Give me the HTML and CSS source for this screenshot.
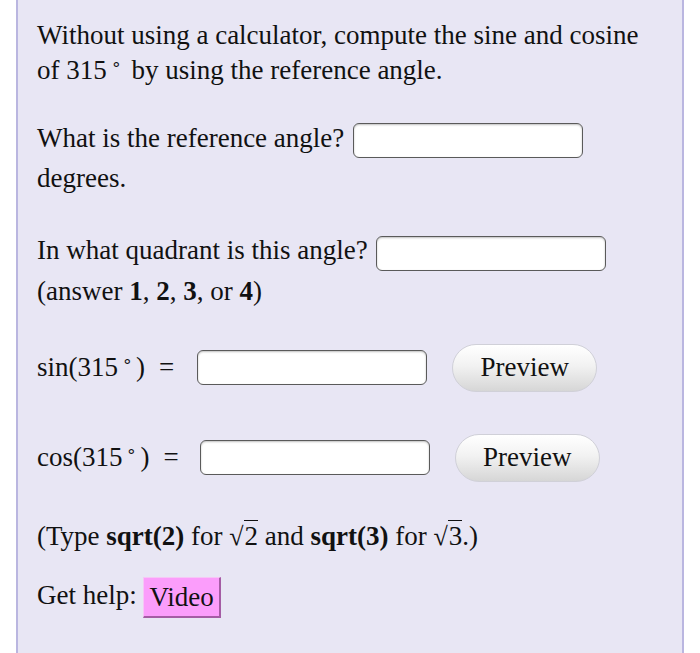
FILE: index.html
```html
<!DOCTYPE html>
<html>
<head>
<meta charset="utf-8">
<link rel="stylesheet" href="styles.css">
</head>
<body>
<div class="panel">
  <p class="intro"><span class="ln">Without using a calculator, compute the sine and cosine</span> <span class="ln">of <span class="m">315<span class="deg">∘</span></span> by using the reference angle.</span></p>

  <p class="q q1">What is the reference angle? <span class="field"></span><br>degrees.</p>

  <p class="q q2">In what quadrant is this angle? <span class="field"></span><br>(answer <b>1</b>, <b>2</b>, <b>3</b>, or <b>4</b>)</p>

  <div class="row row-sin">
    <span class="m expr">sin(315<span class="deg">∘</span>)<span class="eq">=</span></span>
    <span class="field"></span>
    <span class="preview">Preview</span>
  </div>

  <div class="row row-cos">
    <span class="m expr">cos(315<span class="deg">∘</span>)<span class="eq">=</span></span>
    <span class="field"></span>
    <span class="preview">Preview</span>
  </div>

  <p class="hint">(Type <b>sqrt(2)</b> for <span class="sqrt"><span class="rad">√</span><span class="under">2</span></span> and <b>sqrt(3)</b> for <span class="sqrt"><span class="rad">√</span><span class="under">3</span></span>.)</p>

  <p class="help">Get help: <span class="video">Video</span></p>
</div>
</body>
</html>
```

FILE: styles.css
```css
html, body {
  margin: 0;
  padding: 0;
  background: #ffffff;
}
body {
  font-family: "Liberation Serif", "Times New Roman", serif;
  font-size: 27px;
  color: #111111;
}
.panel {
  margin-left: 16px;
  width: 668px;
  height: 653px;
  box-sizing: border-box;
  padding: 18px 19px 0 19px;
  background: #e8e6f4;
  border-left: 2px solid #bab6e0;
  border-right: 2px solid #bab6e0;
}
p {
  margin: 0;
}
.intro {
  line-height: 35px;
}
.ln {
  display: inline-block;
}
.m {
  font-family: "Liberation Serif", serif;
}
.deg {
  font-size: 17px;
  line-height: 17px;
  vertical-align: 10px;
  margin-left: 4px;
  margin-right: 3px;
}
.field {
  display: inline-block;
  width: 230px;
  height: 35px;
  box-sizing: border-box;
  background: #ffffff;
  border: 1px solid #5a5a5a;
  border-radius: 6px;
  box-shadow: inset 0 1px 2px rgba(0,0,0,0.25);
  vertical-align: middle;
}
.q {
  line-height: 40px;
}
.q .field {
  margin-left: 2px;
}
.q1 {
  margin-top: 30px;
}
.q2 {
  margin-top: 32px;
}
.row {
  display: flex;
  align-items: center;
  height: 48px;
}
.row-sin {
  margin-top: 33px;
}
.row-cos {
  margin-top: 42px;
}
.expr {
  white-space: nowrap;
}
.eq {
  margin-left: 14px;
}
.row-sin .field {
  margin-left: 23px;
}
.row-cos .field {
  margin-left: 21px;
}
.preview {
  margin-left: 25px;
  width: 145px;
  height: 48px;
  box-sizing: border-box;
  border-radius: 24px;
  border: 1px solid #d0d0d8;
  background: linear-gradient(#ffffff, #f2f2f2 45%, #d6d6d6);
  display: flex;
  align-items: center;
  justify-content: center;
  font-size: 27px;
}
.hint {
  margin-top: 37px;
  line-height: 35px;
}
.sqrt {
  white-space: nowrap;
}
.rad {
  font-size: 26px;
  line-height: 26px;
}
.under {
  border-top: 1.5px solid #111;
  padding-left: 1px;
}
.help {
  margin-top: 20px;
  line-height: 42px;
}
.video {
  display: inline-block;
  height: 41px;
  line-height: 38px;
  padding: 0 5px;
  box-sizing: border-box;
  background: #fb9dfb;
  border-top: 1px solid #f6c6f6;
  border-left: 1px solid #f6c6f6;
  border-right: 2px solid #a45ca4;
  border-bottom: 2px solid #a45ca4;
  margin-left: 0;
  vertical-align: middle;
}
```
